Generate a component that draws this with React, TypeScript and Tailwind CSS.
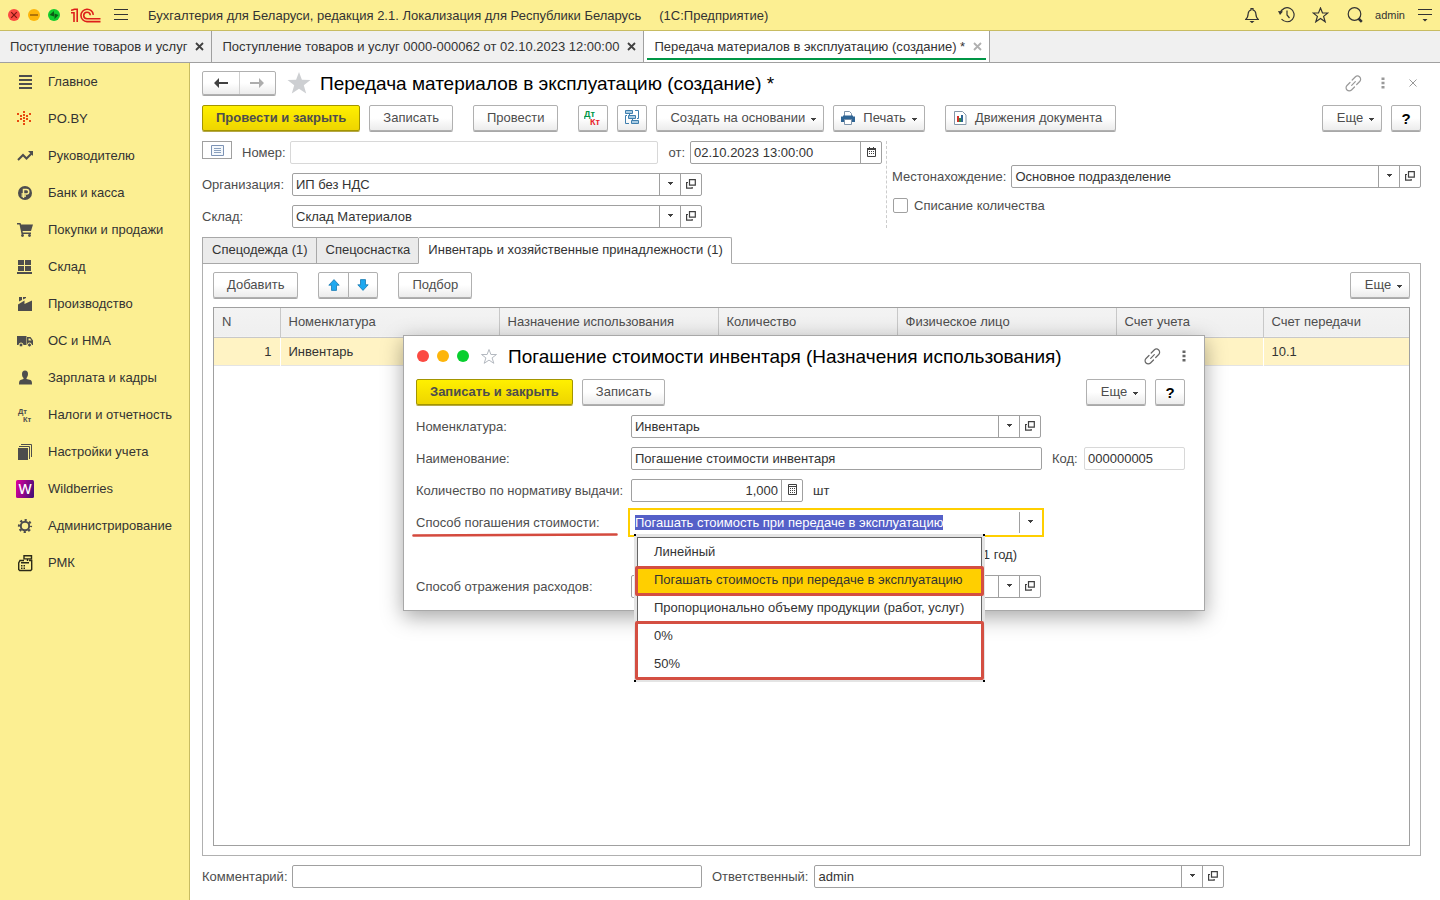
import { useEffect, useRef, useState } from 'react'
import type { ReactNode } from 'react'
import clsx from 'clsx'

const ICON = '#4d4d4d'

const MENU: { label: string; icon: ReactNode }[] = [
  { label: 'Главное', icon: <path fill={ICON} d="M2 2h13v2H2zM2 6h13v2H2zM2 10h13v2H2zM2 14h13v2H2z" /> },
  {
    label: 'PO.BY',
    icon: (
      <path fill="#e8490f" d="M6 1h2v2H6zM6 4h2v2H6zM6 7h2v2H6zM6 10h2v2H6zM6 13h2v2H6zM3 5h2v2H3zM3 8h2v2H3zM9 5h2v2H9zM9 8h2v2H9zM0 3h2v2H0zM0 10h2v2H0zM12 3h2v2h-2zM12 10h2v2h-2z" />
    ),
  },
  {
    label: 'Руководителю',
    icon: (
      <>
        <path fill="none" stroke={ICON} strokeWidth="2" d="M1 13l5-5 3.500 3.500L15 6" />
        <path fill={ICON} d="M11 4h5v5z" />
      </>
    ),
  },
  {
    label: 'Банк и касса',
    icon: (
      <>
        <circle cx="8" cy="9" r="7" fill={ICON} />
        <path fill="none" stroke="#fcef92" strokeWidth="1.500" d="M6.500 14V5.500h3a2.200 2.200 0 0 1 0 4.500H4.500M4.500 12H9" />
      </>
    ),
  },
  {
    label: 'Покупки и продажи',
    icon: (
      <>
        <path fill={ICON} d="M0 2h3.500l.6 1.500H16l-2 6.500H5.500l.4 1.500H14V13H4.500L2.500 3.500H0z" />
        <circle cx="5.500" cy="14.500" r="1.400" fill={ICON} />
        <circle cx="12.500" cy="14.500" r="1.400" fill={ICON} />
      </>
    ),
  },
  { label: 'Склад', icon: <path fill={ICON} d="M1 2h6v5H1zM8 2h6v5H8zM1 8h6v5H1zM8 8h6v5H8zM0 14h15v2H0z" /> },
  {
    label: 'Производство',
    icon: <path fill={ICON} d="M2 2h3v3l-3 1.500zM6 2h3v1L6 4.500zM1 16V9.500l6.500-4V9L15 5.500V16z" />,
  },
  {
    label: 'ОС и НМА',
    icon: (
      <>
        <path fill={ICON} d="M0 4h9.500v9H0zM10 5h3.500L16 8.500V13h-6z" />
        <path fill="#fcef92" d="M11.500 6.500H13l1.500 2h-3z" />
        <circle cx="4" cy="13" r="2" fill={ICON} stroke="#fcef92" />
        <circle cx="12.500" cy="13" r="2" fill={ICON} stroke="#fcef92" />
      </>
    ),
  },
  {
    label: 'Зарплата и кадры',
    icon: <path fill={ICON} d="M8 1.500c2 0 3 1.500 3 3.500s-1 3.500-1.500 4v1l4 1c1 .5 1.500 1.500 1.500 4.500H2c0-3 .5-4 1.500-4.500l3-1V9C5.500 8 5 7 5 5s1-3.500 3-3.500z" />,
  },
  {
    label: 'Налоги и отчетность',
    icon: (
      <g fill={ICON} fontFamily="Liberation Sans" fontWeight="700" fontSize="7.500">
        <text x="1" y="8">Дт</text>
        <text x="6" y="16">Кт</text>
      </g>
    ),
  },
  {
    label: 'Настройки учета',
    icon: (
      <>
        <path fill={ICON} d="M1 5h10v12H1z" />
        <path fill="none" stroke={ICON} d="M2 3.500h10.500V16M4 1.500h10.500V14" />
      </>
    ),
  },
  {
    label: 'Wildberries',
    icon: (
      <>
        <defs>
          <linearGradient id="wb" x1="0" x2="1" y1="0.300" y2="0.600">
            <stop offset="0" stopColor="#d4009b" />
            <stop offset="1" stopColor="#4a0d78" />
          </linearGradient>
        </defs>
        <rect x="-1" y="0" width="18" height="18" rx="1.500" fill="url(#wb)" />
        <text x="8" y="14" textAnchor="middle" fill="#fff" fontFamily="Noto Sans" fontWeight="500" fontSize="14">W</text>
      </>
    ),
  },
  {
    label: 'Администрирование',
    icon: (
      <>
        <circle cx="8" cy="9" r="4.200" fill="none" stroke={ICON} strokeWidth="2" />
        <circle cx="8" cy="9" r="6" fill="none" stroke={ICON} strokeWidth="2.200" strokeDasharray="2.200 2.512" strokeDashoffset="1.100" />
      </>
    ),
  },
  {
    label: 'РМК',
    icon: (
      <>
        <path fill="none" stroke="#2b2a18" strokeWidth="1.400" d="M7 6.500H3L1.700 9v6.500l1 1h11l1-1V6.500H12M7 1.700h7.500v3.200H7zM10.500 5v2" />
        <path fill="#2b2a18" d="M4 8h8v1.500H4zM4 11h1.500v1.500H4zM6.500 11H8v1.500H6.500zM4 13.500h1.500V15H4zM6.500 13.500H8V15H6.500z" />
      </>
    ),
  },
]

const COLUMNS = [
  { title: 'N', width: 'w-[66px]' },
  { title: 'Номенклатура', width: 'w-[219px]' },
  { title: 'Назначение использования', width: 'w-[219px]' },
  { title: 'Количество', width: 'w-[179px]' },
  { title: 'Физическое лицо', width: 'w-[219px]' },
  { title: 'Счет учета', width: 'w-[147px]' },
  { title: 'Счет передачи', width: '' },
]

const METHODS = [
  'Линейный',
  'Погашать стоимость при передаче в эксплуатацию',
  'Пропорционально объему продукции (работ, услуг)',
  '0%',
  '50%',
]

function Caret() {
  return (
    <svg width="5" height="3" viewBox="0 0 5 3" className="shrink-0">
      <path fill="#404040" d="M0 0h5v1H4v1H3v1H2V2H1V1H0z" />
    </svg>
  )
}

function OpenIcon() {
  return (
    <svg width="10" height="10" viewBox="0 0 10 10" fill="none" stroke="#404040" strokeWidth="1.200">
      <path d="M3.500.6h5.800v5.600H3.500zM2 3.500H.6v5.700h5.600V8" />
    </svg>
  )
}

function LinkIcon({ className }: { className?: string }) {
  return (
    <svg width="17" height="17" viewBox="0 0 17 17" fill="none" stroke="currentColor" strokeWidth="1.200" strokeLinecap="round" className={className}>
      <path d="M7.200 5l3-3a3 3 0 0 1 4.500 4.500l-3 3M9.500 12l-3 3A3 3 0 0 1 2 10.500l3-3M6.700 10.300l3.600-3.600" />
    </svg>
  )
}

function Dots({ className }: { className?: string }) {
  return (
    <svg width="4" height="12" viewBox="0 0 4 12" fill="currentColor" className={className}>
      <path d="M.5.500h3v2.500h-3zM.5 4.800h3v2.500h-3zM.5 9h3v2.500h-3z" />
    </svg>
  )
}

function Btn({ children, primary, className, label }: { children: ReactNode; primary?: boolean; className?: string; label?: string }) {
  return (
    <button
      type="button"
      aria-label={label}
      className={clsx(
        'flex h-[26px] shrink-0 items-center justify-center rounded-[2px] border pb-px whitespace-nowrap text-[#4d4d4d]',
        primary
          ? 'border-[#a39500] bg-linear-to-b from-[#fff000] to-[#eed500] font-bold shadow-[0_1px_0_#b5a846]'
          : 'border-[#b0b0b0] bg-linear-to-b from-white from-50% to-[#ececec] shadow-[0_1px_0_#a8a8a8]',
        className ?? 'px-[13px]',
      )}
    >
      {children}
    </button>
  )
}

function MoreButtons({ help }: { help?: boolean }) {
  return (
    <div className="ml-auto flex gap-[9px]">
      <Btn className="w-[60px] gap-[6px] pr-[6px] pl-[13px]">
        Еще
        <span className="pt-1"><Caret /></span>
      </Btn>
      {help && <Btn className="w-[30px] pt-px text-[15px] font-bold"><span className="text-black">?</span></Btn>}
    </div>
  )
}

// Reference field: value list plus a button that opens the linked item
function RefSelect({ id, value, className }: { id: string; value: string; className?: string }) {
  return (
    <div className={clsx('flex h-[23px] rounded-[2px] border border-[#a0a0a0] bg-white', className)}>
      <div className="relative flex min-w-0 flex-1">
        <select id={id} className="min-w-0 flex-1 appearance-none pr-6 pl-[3px] text-[#333] outline-none">
          <option>{value}</option>
        </select>
        <span className="pointer-events-none absolute inset-y-0 right-0 flex w-[21px] items-center justify-center border-l border-[#a0a0a0] pb-[2px]">
          <Caret />
        </span>
      </div>
      <button type="button" aria-label="Открыть" className="flex w-[21px] items-center justify-center border-l border-[#a0a0a0] pb-px">
        <OpenIcon />
      </button>
    </div>
  )
}

function TopBar() {
  return (
    <header className="flex h-[31px] items-center border-b border-[#c8bc62] bg-[#fcef92] px-2 text-[#333]">
      <svg width="52" height="12" viewBox="0 0 52 12" className="shrink-0">
        <circle cx="6" cy="6" r="6" fill="#fb4a42" />
        <path stroke="#7d1512" strokeWidth="1.200" d="M3.200 3.200l5.600 5.600M8.800 3.200L3.200 8.800" />
        <circle cx="26" cy="6" r="6" fill="#fdb50b" />
        <path stroke="#96600a" strokeWidth="1.500" d="M22 6h8" />
        <circle cx="46" cy="6" r="6" fill="#12cc2e" />
        <path fill="#0b5c16" d="M46 2v5.500L41.500 6zM46.500 10V4.500L50.500 6z" />
      </svg>
      <svg width="30" height="15" viewBox="0 0 30 15" fill="none" stroke="#dd1f1a" strokeWidth="1.600" className="ml-[11px] shrink-0">
        <path d="M0 4.800h3V14M0 2.200C2 2.200 3 1.200 3.500 1.200H6.200V14" />
        <path d="M22.300 6.800A6.200 6.200 0 1 0 16 13.600H29.500M19.300 7.200A3.300 3.300 0 1 0 16 10.800H29.500" />
      </svg>
      <button type="button" aria-label="Меню" className="ml-[13px]">
        <svg width="14" height="12" viewBox="0 0 14 12" fill="#333">
          <path d="M0 0h14v1H0zM0 5h14v1H0zM0 10h14v1H0z" />
        </svg>
      </button>
      <span className="ml-5 flex gap-[18px] whitespace-nowrap">
        <span>Бухгалтерия для Беларуси, редакция 2.1. Локализация для Республики Беларусь</span>
        <span>(1С:Предприятие)</span>
      </span>
      <div className="ml-auto flex items-center">
        <svg width="14" height="15" viewBox="0 0 14 15" fill="none" stroke="#333" strokeWidth="1.200">
          <path d="M.7 11.500h12.600c-2-1.500-2.300-3.500-2.500-6C10.600 3.200 9.200 2.300 8 2V.7H6V2c-1.200.3-2.600 1.200-2.800 3.500-.2 2.500-.5 4.500-2.500 6z" />
          <path fill="#333" stroke="none" d="M4.500 13h5L7 15.200z" />
        </svg>
        <svg width="17" height="16" viewBox="0 0 17 16" fill="none" stroke="#333" strokeWidth="1.200" className="ml-[19px]">
          <path d="M2.300 6A7 7 0 1 1 3.500 12M9 3.500V8l2.500 3" />
          <path fill="#333" stroke="none" d="M0 4l5 .5L2 8z" />
        </svg>
        <svg width="17" height="16" viewBox="0 0 17 16" fill="none" stroke="#333" strokeWidth="1.200" className="ml-[17px]">
          <path d="M8.500 1l2 5h5.300l-4.200 3.400 1.600 5.400-4.700-3.200-4.700 3.200 1.600-5.400L1.200 6h5.300z" />
        </svg>
        <svg width="16" height="16" viewBox="0 0 16 16" fill="none" stroke="#333" className="ml-[18px]">
          <circle cx="7.500" cy="7" r="6.300" strokeWidth="1.200" />
          <path strokeWidth="2.500" d="M11.500 11.500l3.300 3.300" />
        </svg>
        <span className="ml-3 text-[11px]">admin</span>
        <svg width="14" height="14" viewBox="0 0 14 14" fill="#333" className="ml-[13px]">
          <path d="M0 1h14v1H0zM0 6h14v1H0zM4.500 11h5L7 13.500z" />
        </svg>
      </div>
    </header>
  )
}

const WINDOWS = [
  'Поступление товаров и услуг',
  'Поступление товаров и услуг 0000-000062 от 02.10.2023 12:00:00',
  'Передача материалов в эксплуатацию (создание) *',
]

function WindowTabs() {
  return (
    <nav className="flex h-8 border-b border-[#a0a0a0] bg-[#f0f0f0] text-[#333]">
      {WINDOWS.map((title, i) => (
        <div
          key={title}
          className={clsx('relative flex items-center border-r border-[#a0a0a0] pr-[7px] whitespace-nowrap', i === 2 && 'bg-white')}
        >
          <a href="#" className="pl-[10px]">{title}</a>
          <button type="button" aria-label="Закрыть" className="ml-2">
            <svg width="9" height="9" viewBox="0 0 9 9" stroke={i === 2 ? '#b0b0b0' : '#404040'} strokeWidth="1.800">
              <path d="M1 1l7 7M8 1L1 8" />
            </svg>
          </button>
          {i === 2 && <span className="absolute inset-x-[3px] bottom-[2px] h-[2px] bg-[#009646]" />}
        </div>
      ))}
    </nav>
  )
}

function Sidebar() {
  return (
    <aside className="w-[190px] shrink-0 border-r border-[#c8bc62] bg-[#fcef92] text-[#333]">
      {MENU.map(item => (
        <a key={item.label} href="#" className="flex h-[37px] items-center gap-[15px] pl-[17px] whitespace-nowrap">
          <svg width="16" height="18" viewBox="0 0 16 18" className="shrink-0 overflow-visible">{item.icon}</svg>
          {item.label}
        </a>
      ))}
    </aside>
  )
}

function Dialog() {
  const [method, setMethod] = useState(METHODS[1])
  const methodRef = useRef<HTMLInputElement>(null)

  useEffect(() => {
    methodRef.current?.focus()
    methodRef.current?.select()
  }, [])

  return (
    <section
      role="dialog"
      aria-label="Погашение стоимости инвентаря"
      className="absolute top-[272px] left-[213px] w-[802px] border border-[#a8a8a8] bg-white px-3 pb-3 text-[#4d4d4d] shadow-[0_6px_20px_rgba(0,0,0,0.35)]"
    >
      <div className="flex h-[43px] items-center pr-[6px] pb-[3px]">
        <svg width="54" height="12" viewBox="0 0 54 12">
          <circle cx="7" cy="6" r="6" fill="#fb4a42" />
          <circle cx="27" cy="6" r="6" fill="#fdb50b" />
          <circle cx="47" cy="6" r="6" fill="#08cf2e" />
        </svg>
        <svg width="18" height="17" viewBox="0 0 18 17" fill="none" stroke="#b4b9c0" className="ml-[10px]">
          <path d="M9 1.500l1.900 5h5.600l-4.400 3.400 1.700 5.400L9 12.100l-4.800 3.200 1.700-5.400L1.500 6.500h5.600z" />
        </svg>
        <h2 className="ml-[10px] text-[19px] whitespace-nowrap text-black">Погашение стоимости инвентаря (Назначения использования)</h2>
        <LinkIcon className="ml-auto text-[#666]" />
        <Dots className="ml-[21px] text-[#666]" />
      </div>
      <div className="flex gap-[9px] pr-[7px]">
        <Btn primary>Записать и закрыть</Btn>
        <Btn>Записать</Btn>
        <MoreButtons help />
      </div>

      <div className="mt-[10px] flex flex-col gap-[9px] pr-[7px]">
        <div className="flex items-center">
          <label htmlFor="item" className="w-[215px]">Номенклатура:</label>
          <RefSelect id="item" value="Инвентарь" className="w-[410px]" />
        </div>
        <div className="flex items-center">
          <label htmlFor="name" className="w-[215px]">Наименование:</label>
          <input id="name" defaultValue="Погашение стоимости инвентаря" className="h-[23px] w-[411px] rounded-[2px] border border-[#a0a0a0] px-[3px] text-[#333]" />
          <label htmlFor="code" className="ml-[10px]">Код:</label>
          <input id="code" defaultValue="000000005" className="ml-auto h-[23px] w-[101px] rounded-[2px] border border-[#d8d8d8] px-[3px] text-[#333]" />
        </div>
        <div className="flex items-center">
          <label htmlFor="qty" className="w-[215px] whitespace-nowrap">Количество по нормативу выдачи:</label>
          <div className="flex h-[23px] w-[172px] rounded-[2px] border border-[#a0a0a0]">
            <input id="qty" defaultValue="1,000" className="min-w-0 flex-1 pr-[3px] text-right text-[#333]" />
            <button type="button" aria-label="Калькулятор" className="flex w-[21px] items-center justify-center border-l border-[#a0a0a0] pb-[2px]">
              <svg width="9" height="11" viewBox="0 0 9 11">
                <path fill="none" stroke="#404040" d="M.5.500h8v10h-8zM.5 2.500h8" />
                <path fill="#404040" d="M2 4h1v1H2zM4 4h1v1H4zM6 4h1v1H6zM2 6h1v1H2zM4 6h1v1H4zM6 6h1v1H6zM2 8h1v1H2zM4 8h1v1H4zM6 8h1v1H6z" />
              </svg>
            </button>
          </div>
          <span className="ml-[10px] text-[#333]">шт</span>
        </div>
        <div className="flex items-center">
          <div className="relative w-[215px]">
            <label htmlFor="method">Способ погашения стоимости:</label>
            <svg width="206" height="4" viewBox="0 0 206 4" className="absolute top-[18px] -left-1">
              <path stroke="#d44a3e" strokeWidth="2.600" strokeLinecap="round" d="M1.500 2.500l203-1" />
            </svg>
          </div>
          <div className="relative flex h-[23px] w-[410px] outline-2 outline-offset-1 outline-[#ffcf00]">
            <input
              id="method"
              ref={methodRef}
              role="combobox"
              aria-expanded="true"
              aria-controls="methods"
              value={method}
              onChange={e => setMethod(e.target.value)}
              className="min-w-0 flex-1 pl-1 text-[#333] outline-none selection:bg-[#5560c8] selection:text-white"
            />
            <button type="button" aria-label="Выбрать" className="my-[1px] flex w-[22px] items-center justify-center border-l border-[#a0a0a0] pb-[2px]">
              <Caret />
            </button>
            {/* Drop-down list with its grey frame and corner marks */}
            <div className="absolute top-[23px] left-[3px] z-10 w-[351px] border-[3px] border-[#e4e4e4] bg-white">
              <span className="absolute -top-[3px] -left-[3px] size-[2px] bg-black" />
              <span className="absolute -top-[3px] -right-[3px] size-[2px] bg-black" />
              <span className="absolute -bottom-[3px] -left-[3px] size-[2px] bg-black" />
              <span className="absolute -right-[3px] -bottom-[3px] size-[2px] bg-black" />
              <ul id="methods" role="listbox" className="relative border border-[#666] text-[#333]">
                {METHODS.map(m => (
                  <li
                    key={m}
                    role="option"
                    aria-selected={m === method}
                    onClick={() => setMethod(m)}
                    className={clsx('flex h-7 items-center px-4 pb-[2px] whitespace-nowrap', m === method && 'bg-[#ffcf00]')}
                  >
                    {m}
                  </li>
                ))}
                <span className="pointer-events-none absolute -inset-x-[3px] top-[28px] h-[30px] rounded-[2px] border-[3px] border-[#d44f42]" />
                <span className="pointer-events-none absolute -inset-x-[3px] top-[83px] h-[59px] rounded-[2px] border-[3px] border-[#d44f42]" />
              </ul>
            </div>
          </div>
        </div>
        <div className="flex h-[23px] w-[601px] items-center justify-end text-[#333]">(1 год)</div>
        <div className="flex items-center">
          <label htmlFor="expense" className="w-[215px]">Способ отражения расходов:</label>
          <RefSelect id="expense" value="" className="w-[410px]" />
        </div>
      </div>
    </section>
  )
}

function DocumentHeader() {
  return (
    <>
      <div className="flex h-6 items-center">
        <div className="flex h-[24px] w-[74px] rounded-[2px] border border-[#b0b0b0] bg-linear-to-b from-white from-50% to-[#ececec] shadow-[0_1px_0_#a8a8a8]">
          <button type="button" aria-label="Назад" className="flex flex-1 items-center justify-center">
            <svg width="14" height="10" viewBox="0 0 14 10" fill="#404040"><path d="M0 5l5-5v4h9v2H5v4z" /></svg>
          </button>
          <button type="button" aria-label="Вперед" className="flex flex-1 items-center justify-center border-l border-[#d0d0d0]">
            <svg width="14" height="10" viewBox="0 0 14 10" fill="#adadad"><path d="M14 5L9 0v4H0v2h9v4z" /></svg>
          </button>
        </div>
        <svg width="24" height="22" viewBox="0 0 24 22" fill="#cdcfd2" className="ml-[11px]">
          <path d="M12 0l2.900 7.700 8.600.3-6.700 5.200 2.400 8.300L12 16.800l-7.200 4.700 2.400-8.300L.5 8l8.600-.3z" />
        </svg>
        <h1 className="ml-[9px] text-[19px] whitespace-nowrap text-black">Передача материалов в эксплуатацию (создание) *</h1>
        <div className="ml-auto flex items-center gap-[19px] pr-1 text-[#999]">
          <LinkIcon />
          <Dots />
          <button type="button" aria-label="Закрыть" className="ml-[5px]">
            <svg width="8" height="8" viewBox="0 0 8 8" stroke="#999"><path d="M.5.500l7 7M7.500.500l-7 7" /></svg>
          </button>
        </div>
      </div>

      <div className="mt-[10px] flex">
        <Btn primary>Провести и закрыть</Btn>
        <div className="ml-[9px] flex gap-5">
          <Btn>Записать</Btn>
          <Btn>Провести</Btn>
          <div className="flex gap-[9px]">
            <Btn className="w-[30px]" label="Проводки">
              <svg width="18" height="17" viewBox="0 0 18 17" fontFamily="Liberation Sans" fontWeight="700" fontSize="9">
                <text x="0" y="8" fill="#009646">Дт</text>
                <text x="6" y="16" fill="#e8232a">Кт</text>
              </svg>
            </Btn>
            <Btn className="w-[30px]" label="Структура подчиненности">
              <svg width="15" height="15" viewBox="0 0 15 15" fill="#a9cce3" stroke="#3f7fae">
                <path d="M.5.500h7v3h-7zM3.500 5.500h7v3h-7zM6.500 10.500h7v3h-7z" />
                <path fill="none" d="M10 .500h3.500v8H12M4 13.500H.5v-8H2M4.500 3.500v2M7.500 8.500v2" />
              </svg>
            </Btn>
            <Btn className="gap-[6px] pr-[7px] pl-[13px]">
              Создать на основании
              <span className="pt-1"><Caret /></span>
            </Btn>
            <Btn className="gap-[6px] pr-[7px] pl-[7px]">
              <svg width="14" height="14" viewBox="0 0 14 14">
                <path fill="#fff" stroke="#7d93aa" d="M3.500 5V.500h5l2 2V5" />
                <path fill="#2f6595" d="M0 5.500h2V4.500h10v1h2V11H0z" />
                <path fill="#fff" stroke="#7d93aa" d="M3.500 8.500h7v5h-7z" />
              </svg>
              <span className="pl-[2px]">Печать</span>
              <span className="pt-1"><Caret /></span>
            </Btn>
          </div>
          <Btn className="gap-2 pr-[13px] pl-[8px]">
            <svg width="13" height="14" viewBox="0 0 13 14">
              <path fill="#fff" stroke="#8496a8" d="M.5.500h8l3.500 3.500v9.500H.5z" />
              <path fill="#d4322a" d="M3 5h2v6H3z" />
              <path fill="#2f8f46" d="M5 7h2v4H5z" />
              <path fill="#2f6595" d="M7 4h2v7H7z" />
            </svg>
            Движения документа
          </Btn>
        </div>
        <MoreButtons help />
      </div>

      <div className="mt-[10px] flex text-[#4d4d4d]">
        <div className="flex w-[680px] flex-col gap-[9px]">
          <div className="flex items-center">
            <button type="button" aria-label="Состояние" className="flex h-[18px] w-[30px] items-center justify-center self-start border border-[#a0a0a0]">
              <svg width="13" height="11" viewBox="0 0 13 11" fill="none">
                <path stroke="#7d93b5" fill="#f4f8fc" d="M.5.500h12v10H.5z" />
                <path stroke="#8ba0bd" d="M3 3.500h7M3 5.500h7M3 7.500h7" />
              </svg>
            </button>
            <label htmlFor="number" className="ml-[10px]">Номер:</label>
            <input id="number" className="ml-1 h-[23px] min-w-0 flex-1 rounded-[2px] border border-[#d8d8d8] px-[3px]" />
            <label htmlFor="date" className="mr-[5px] ml-[10px]">от:</label>
            <div className="flex h-[23px] w-[192px] rounded-[2px] border border-[#a0a0a0]">
              <input id="date" defaultValue="02.10.2023 13:00:00" className="min-w-0 flex-1 pl-[3px] text-[#333]" />
              <button type="button" aria-label="Календарь" className="flex w-[21px] items-center justify-center border-l border-[#a0a0a0] pb-[2px]">
                <svg width="9" height="10" viewBox="0 0 9 10">
                  <path fill="none" stroke="#404040" d="M.5 1.500h8v8h-8z" />
                  <path fill="#404040" d="M0 1h9v2H0zM2 0h1v1H2zM6 0h1v1H6zM2 4h1v1H2zM4 4h1v1H4zM6 4h1v1H6zM2 6h1v1H2zM4 6h1v1H4zM6 6h1v1H6z" />
                </svg>
              </button>
            </div>
          </div>
          <div className="flex items-center">
            <label htmlFor="org" className="w-[90px]">Организация:</label>
            <RefSelect id="org" value="ИП без НДС" className="w-[410px]" />
          </div>
          <div className="flex items-center">
            <label htmlFor="stock" className="w-[90px]">Склад:</label>
            <RefSelect id="stock" value="Склад Материалов" className="w-[410px]" />
          </div>
        </div>
        <div className="ml-1 flex flex-1 flex-col gap-[10px] border-l border-dashed border-[#ccc] pt-6 pl-[5px]">
          <div className="flex items-center gap-[5px]">
            <label htmlFor="place">Местонахождение:</label>
            <RefSelect id="place" value="Основное подразделение" className="flex-1" />
          </div>
          <label className="flex items-center gap-[6px]">
            <input type="checkbox" className="ml-px size-[15px] appearance-none rounded-[2px] border border-[#a0a0a0]" />
            Списание количества
          </label>
        </div>
      </div>
    </>
  )
}

const TABS = ['Спецодежда (1)', 'Спецоснастка', 'Инвентарь и хозяйственные принадлежности (1)']

function Inventory() {
  return (
    <>
      <div role="tablist" className="relative z-[1] mt-[9px] -mb-px flex text-[#333]">
        {TABS.map((t, i) => (
          <button
            key={t}
            type="button"
            role="tab"
            aria-selected={i === 2}
            className={clsx(
              'h-[27px] border border-[#a8a8a8] pr-2 pb-[2px] pl-[9px] whitespace-nowrap',
              i === 2 ? 'rounded-t-[2px] border-b-white bg-white' : 'border-r-0 bg-[#ebebeb]',
            )}
          >
            {t}
          </button>
        ))}
      </div>
      <div className="flex flex-1 flex-col border border-[#b0b0b0] px-[10px] pt-2 pb-[9px]">
        <div className="flex gap-5">
          <Btn>Добавить</Btn>
          <div className="flex">
            <Btn className="w-[31px] rounded-r-none" label="Вверх">
              <svg width="12" height="12" viewBox="0 0 12 12" fill="#1da8f0" stroke="#1878b0" strokeWidth=".8"><path d="M6 .6l5.200 5.600H8.500v5.200h-5V6.200H.8z" /></svg>
            </Btn>
            <Btn className="-ml-px w-[30px] rounded-l-none" label="Вниз">
              <svg width="12" height="12" viewBox="0 0 12 12" fill="#1da8f0" stroke="#1878b0" strokeWidth=".8"><path d="M6 11.400L.8 5.800h2.700V.6h5v5.200h2.700z" /></svg>
            </Btn>
          </div>
          <Btn>Подбор</Btn>
          <MoreButtons />
        </div>
        <div className="mt-[9px] flex-1 border border-[#a0a0a0]">
          <table className="w-full table-fixed border-collapse">
            <thead>
              <tr className="h-[29px] border-b border-[#c8c8c8] bg-linear-to-b from-[#f3f3f3] to-[#efefef] text-[#4d4d4d]">
                {COLUMNS.map(c => (
                  <th key={c.title} className={clsx('border-r border-[#c8c8c8] px-2 pb-px text-left font-normal whitespace-nowrap last:border-r-0', c.width)}>
                    {c.title}
                  </th>
                ))}
              </tr>
            </thead>
            <tbody>
              <tr className="h-7 border-b border-[#e4e4e4] bg-[#fff3c4] text-[#333]">
                <td className="border-r border-white px-2 text-right">1</td>
                <td className="border-r border-white px-2">Инвентарь</td>
                <td className="border-r border-white" />
                <td className="border-r border-white" />
                <td className="border-r border-white" />
                <td className="border-r border-white" />
                <td className="px-2">10.1</td>
              </tr>
            </tbody>
          </table>
        </div>
      </div>
    </>
  )
}

export default function App() {
  return (
    <div className="flex min-h-screen flex-col bg-white font-['Liberation_Sans',Arial,sans-serif] text-[13px] leading-[15px]">
      <TopBar />
      <WindowTabs />
      <div className="flex flex-1">
        <Sidebar />
        <main className="relative flex min-w-0 flex-1 flex-col pt-2 pr-[19px] pb-3 pl-3">
          <DocumentHeader />
          <Inventory />
          <div className="mt-[9px] flex items-center text-[#4d4d4d]">
            <label htmlFor="comment" className="w-[90px]">Комментарий:</label>
            <input id="comment" className="h-[23px] w-[410px] rounded-[2px] border border-[#a0a0a0] px-[3px]" />
            <label htmlFor="owner" className="mr-[6px] ml-[10px]">Ответственный:</label>
            <RefSelect id="owner" value="admin" className="w-[410px]" />
          </div>
          <Dialog />
        </main>
      </div>
    </div>
  )
}
